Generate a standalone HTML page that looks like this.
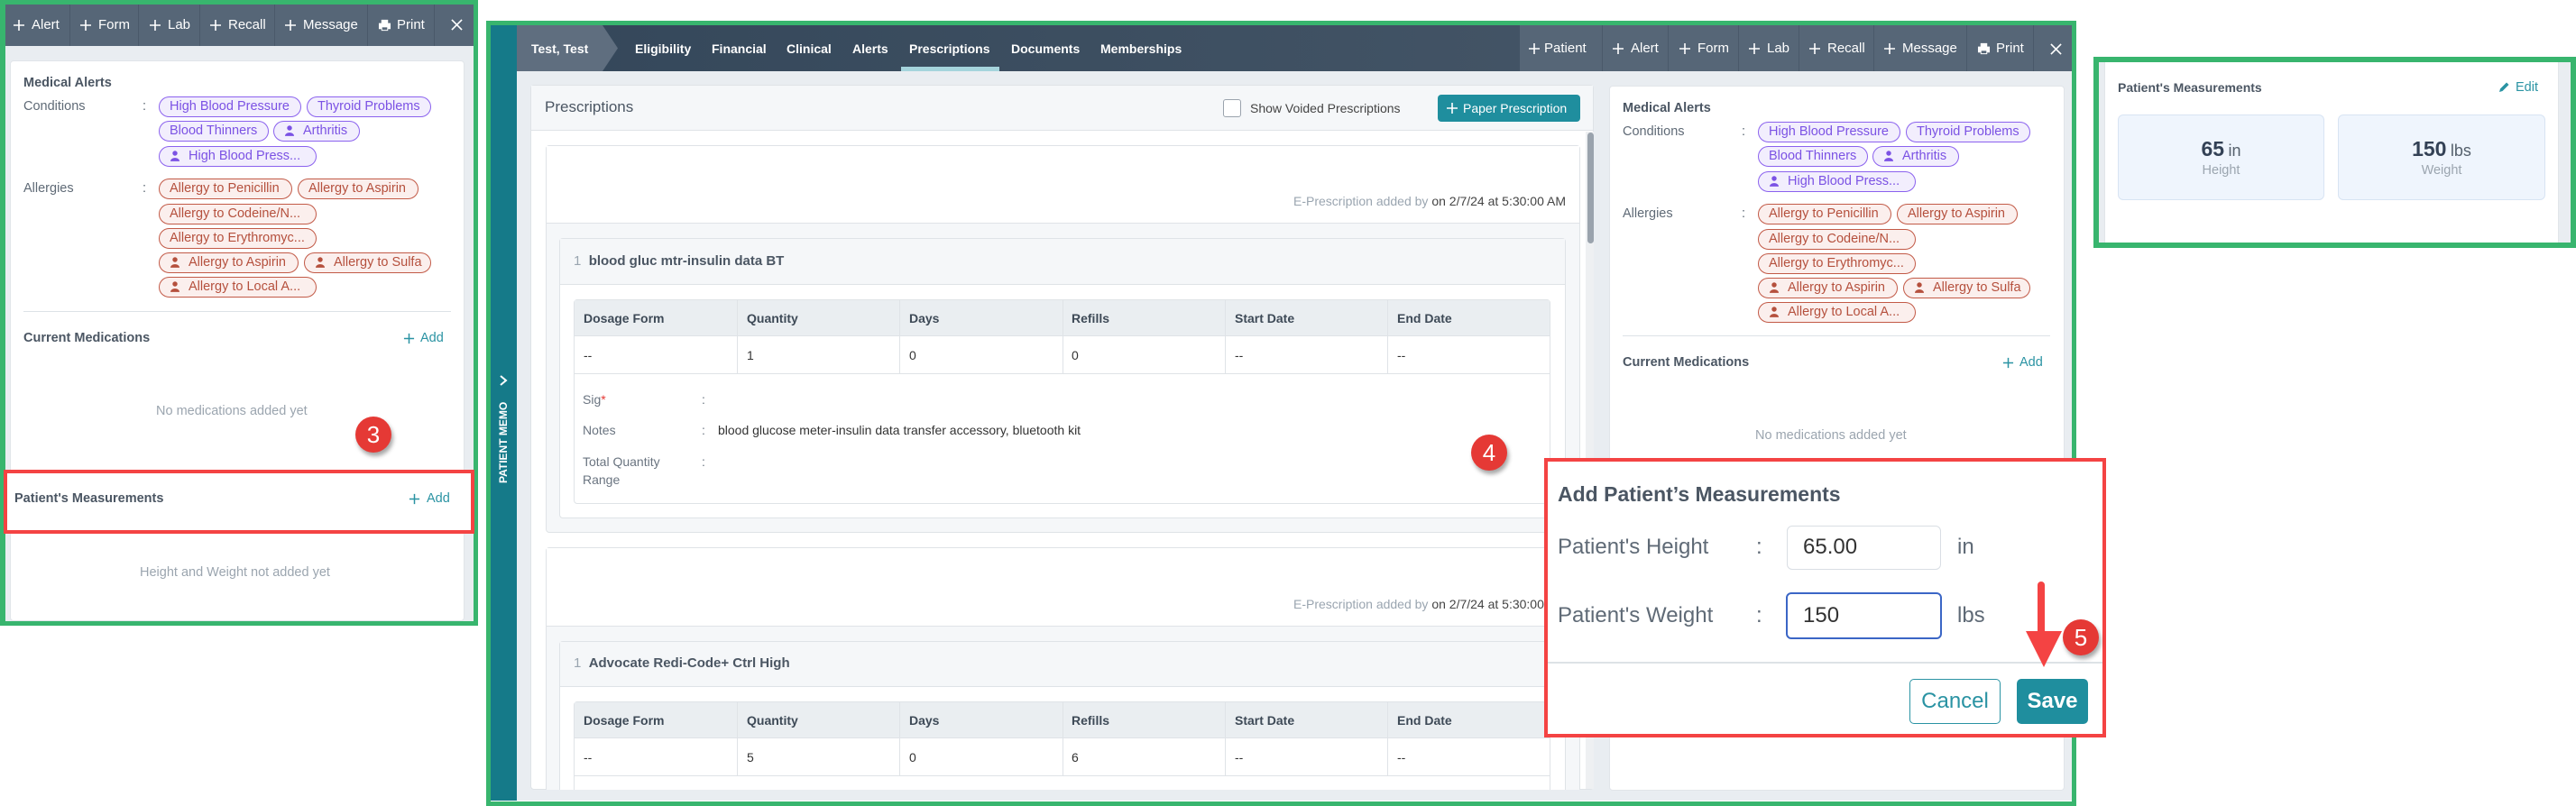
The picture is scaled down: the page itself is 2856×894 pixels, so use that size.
<!DOCTYPE html>
<html><head><meta charset="utf-8">
<style>
*{box-sizing:border-box;margin:0;padding:0}
body{width:2856px;height:894px;overflow:hidden;background:#fff;font-family:"Liberation Sans",Arial,sans-serif;position:relative}
.a{position:absolute}
.t{position:absolute;white-space:nowrap;line-height:20px;height:20px}
.w{color:#fff;font-size:15px}
.b{font-weight:bold}
.sep{position:absolute;width:1px;background:#4a596a}
.c{position:absolute;height:23px;border:1.5px solid;border-radius:12px;font-size:14.5px;line-height:20px;padding-left:11px;white-space:nowrap;overflow:hidden}
.p{border-color:#8b62ee;background:#f2eefd;color:#7b52e4}
.r{border-color:#c25a47;background:#fbefed;color:#b5503d}
.i{padding-left:32px}
.i svg{position:absolute;left:12px;top:4px}
.lbl{color:#5f6a76;font-size:14.5px}
.h{color:#4b5663;font-size:14.5px;font-weight:bold}
.add{color:#2a93a3;font-size:14.5px}
.gray{color:#9ba5af;font-size:14.5px}
.cell{position:absolute;font-size:14px;line-height:20px;white-space:nowrap}
.th{font-weight:bold;color:#3e4a57}
.td{color:#333}
.circ{position:absolute;width:40px;height:40px;border-radius:50%;background:#e53935;color:#fff;font-size:26px;text-align:center;line-height:40px;box-shadow:2px 4px 5px rgba(0,0,0,.35)}
.bd{position:absolute;border:1px solid #dfe3e7;border-radius:4px}
</style></head><body>

<svg width="0" height="0" style="position:absolute">
<defs>
<symbol id="plus" viewBox="0 0 14 14"><path d="M7 1V13M1 7H13" stroke="currentColor" stroke-width="1.6" fill="none"/></symbol>
<symbol id="usr" viewBox="0 0 11 13"><circle cx="5.5" cy="3.2" r="3" fill="currentColor"/><path d="M0 13C0 7.5 11 7.5 11 13Z" fill="currentColor"/></symbol>
<symbol id="prt" viewBox="0 0 16 15"><path d="M4 1h8v4H4z M1 5h14v7h-3v2H4v-2H1z" fill="currentColor"/><path d="M5 10h6v3H5z" fill="#566677"/></symbol>
<symbol id="x" viewBox="0 0 14 14"><path d="M1 1L13 13M13 1L1 13" stroke="currentColor" stroke-width="1.8" fill="none"/></symbol>
</defs></svg>

<!-- ============ LEFT PANEL ============ -->
<div class="a" style="left:0;top:0;width:530px;height:694px;border:6px solid #38b56e"></div>
<div class="a" style="left:6px;top:5px;width:519px;height:46px;background:#566677"></div>
<div class="sep" style="left:77px;top:5px;height:46px"></div>
<div class="sep" style="left:153px;top:5px;height:46px"></div>
<div class="sep" style="left:221px;top:5px;height:46px"></div>
<div class="sep" style="left:304px;top:5px;height:46px"></div>
<div class="sep" style="left:407px;top:5px;height:46px"></div>
<div class="sep" style="left:481px;top:5px;height:46px"></div>
<svg class="a" style="left:14px;top:21px;color:#fff" width="14" height="14"><use href="#plus"/></svg><div class="t w" style="left:35px;top:18px">Alert</div>
<svg class="a" style="left:88px;top:21px;color:#fff" width="14" height="14"><use href="#plus"/></svg><div class="t w" style="left:109px;top:18px">Form</div>
<svg class="a" style="left:165px;top:21px;color:#fff" width="14" height="14"><use href="#plus"/></svg><div class="t w" style="left:186px;top:18px">Lab</div>
<svg class="a" style="left:232px;top:21px;color:#fff" width="14" height="14"><use href="#plus"/></svg><div class="t w" style="left:253px;top:18px">Recall</div>
<svg class="a" style="left:315px;top:21px;color:#fff" width="14" height="14"><use href="#plus"/></svg><div class="t w" style="left:336px;top:18px">Message</div>
<svg class="a" style="left:419px;top:21px;color:#fff" width="15" height="14"><use href="#prt"/></svg><div class="t w" style="left:440px;top:18px">Print</div>
<svg class="a" style="left:500px;top:21px;color:#fff" width="13" height="13"><use href="#x"/></svg>
<div class="a" style="left:6px;top:51px;width:519px;height:638px;background:#e9edf1"></div>
<div class="a" style="left:11px;top:67px;width:504px;height:622px;background:#fff;border:1px solid #e1e5e9;border-radius:4px"></div>

<div class="a" style="left:0;top:0">
<div class="t h" style="left:26px;top:82px">Medical Alerts</div>
<div class="t lbl" style="left:26px;top:108px">Conditions</div><div class="t lbl" style="left:158px;top:108px">:</div>
<div class="c p" style="left:176px;top:107px;width:158px">High Blood Pressure</div>
<div class="c p" style="left:340px;top:107px;width:138px">Thyroid Problems</div>
<div class="c p" style="left:176px;top:134px;width:122px">Blood Thinners</div>
<div class="c p i" style="left:303px;top:134px;width:96px"><svg width="10" height="12"><use href="#usr"/></svg>Arthritis</div>
<div class="c p i" style="left:176px;top:162px;width:175px"><svg width="10" height="12"><use href="#usr"/></svg>High Blood Press...</div>
<div class="t lbl" style="left:26px;top:199px">Allergies</div><div class="t lbl" style="left:158px;top:199px">:</div>
<div class="c r" style="left:176px;top:198px;width:148px">Allergy to Penicillin</div>
<div class="c r" style="left:330px;top:198px;width:134px">Allergy to Aspirin</div>
<div class="c r" style="left:176px;top:226px;width:175px">Allergy to Codeine/N...</div>
<div class="c r" style="left:176px;top:253px;width:175px">Allergy to Erythromyc...</div>
<div class="c r i" style="left:176px;top:280px;width:155px"><svg width="10" height="12"><use href="#usr"/></svg>Allergy to Aspirin</div>
<div class="c r i" style="left:337px;top:280px;width:141px"><svg width="10" height="12"><use href="#usr"/></svg>Allergy to Sulfa</div>
<div class="c r i" style="left:176px;top:307px;width:175px"><svg width="10" height="12"><use href="#usr"/></svg>Allergy to Local A...</div>
<div class="a" style="left:26px;top:345px;width:474px;height:1px;background:#dde2e7"></div>
<div class="t h" style="left:26px;top:365px">Current Medications</div>
<svg class="a" style="left:447px;top:369px;color:#2a93a3" width="13" height="13"><use href="#plus"/></svg><div class="t add" style="left:466px;top:365px">Add</div>
<div class="t gray" style="left:173px;top:446px">No medications added yet</div>
</div>

<div class="circ" style="left:394px;top:462px">3</div>
<div class="a" style="left:4px;top:521px;width:522px;height:71px;border:4px solid #f44343;background:#fff"></div>
<div class="t h" style="left:16px;top:543px">Patient's Measurements</div>
<svg class="a" style="left:453px;top:547px;color:#2a93a3" width="13" height="13"><use href="#plus"/></svg><div class="t add" style="left:473px;top:543px">Add</div>
<div class="t gray" style="left:155px;top:625px">Height and Weight not added yet</div>

<!-- ============ MIDDLE PANEL ============ -->
<div class="a" style="left:539px;top:23px;width:1763px;height:871px;border:5px solid #38b56e"></div>
<div class="a" style="left:544px;top:28px;width:29px;height:860px;background:#157a89"></div>
<svg class="a" style="left:552px;top:416px" width="12" height="12"><path d="M3 1L9 6L3 11" stroke="#fff" stroke-width="2" fill="none"/></svg>
<div class="a" style="left:549px;top:432px;width:18px;height:104px;writing-mode:vertical-rl;transform:rotate(180deg);color:#fff;font-size:12px;font-weight:bold;line-height:18px;white-space:nowrap">PATIENT MEMO</div>

<div class="a" style="left:573px;top:28px;width:1724px;height:51px;background:linear-gradient(90deg,#34475a,#4a5a6b)"></div>
<svg class="a" style="left:573px;top:28px" width="115" height="51"><path d="M0 0H95L112 25.5L95 51H0Z" fill="#5f6e7f"/></svg>
<div class="a" style="left:1685px;top:28px;width:612px;height:51px;background:#566677"></div>
<div class="t w b" style="left:589px;top:44px;font-size:14px">Test, Test</div>
<div class="t w b" style="left:704px;top:44px;font-size:14px">Eligibility</div>
<div class="t w b" style="left:789px;top:44px;font-size:14px">Financial</div>
<div class="t w b" style="left:872px;top:44px;font-size:14px">Clinical</div>
<div class="t w b" style="left:945px;top:44px;font-size:14px">Alerts</div>
<div class="t w b" style="left:1008px;top:44px;font-size:14px">Prescriptions</div>
<div class="t w b" style="left:1121px;top:44px;font-size:14px">Documents</div>
<div class="t w b" style="left:1220px;top:44px;font-size:14px">Memberships</div>
<div class="a" style="left:999px;top:74px;width:109px;height:5px;background:#a5d4dc"></div>
<div class="sep" style="left:1776px;top:28px;height:51px"></div>
<div class="sep" style="left:1849px;top:28px;height:51px"></div>
<div class="sep" style="left:1927px;top:28px;height:51px"></div>
<div class="sep" style="left:1994px;top:28px;height:51px"></div>
<div class="sep" style="left:2077px;top:28px;height:51px"></div>
<div class="sep" style="left:2180px;top:28px;height:51px"></div>
<div class="sep" style="left:2254px;top:28px;height:51px"></div>
<svg class="a" style="left:1694px;top:47px;color:#fff" width="14" height="14"><use href="#plus"/></svg><div class="t w" style="left:1712px;top:44px">Patient</div>
<svg class="a" style="left:1787px;top:47px;color:#fff" width="14" height="14"><use href="#plus"/></svg><div class="t w" style="left:1808px;top:44px">Alert</div>
<svg class="a" style="left:1861px;top:47px;color:#fff" width="14" height="14"><use href="#plus"/></svg><div class="t w" style="left:1882px;top:44px">Form</div>
<svg class="a" style="left:1938px;top:47px;color:#fff" width="14" height="14"><use href="#plus"/></svg><div class="t w" style="left:1959px;top:44px">Lab</div>
<svg class="a" style="left:2005px;top:47px;color:#fff" width="14" height="14"><use href="#plus"/></svg><div class="t w" style="left:2026px;top:44px">Recall</div>
<svg class="a" style="left:2088px;top:47px;color:#fff" width="14" height="14"><use href="#plus"/></svg><div class="t w" style="left:2109px;top:44px">Message</div>
<svg class="a" style="left:2192px;top:47px;color:#fff" width="15" height="14"><use href="#prt"/></svg><div class="t w" style="left:2213px;top:44px">Print</div>
<svg class="a" style="left:2273px;top:48px;color:#fff" width="13" height="13"><use href="#x"/></svg>

<div class="a" style="left:573px;top:79px;width:1724px;height:809px;background:#e9edf1"></div>

<div class="a" style="left:588px;top:94px;width:1179px;height:782px;background:#fff;border:1px solid #dfe3e7;border-radius:4px"></div>
<div class="a" style="left:589px;top:95px;width:1177px;height:50px;background:#f5f7f9;border-bottom:1px solid #dfe3e7"></div>
<div class="t" style="left:604px;top:109px;font-size:17px;color:#4b5663">Prescriptions</div>
<div class="a" style="left:1356px;top:110px;width:20px;height:20px;border:1.5px solid #9aa3ad;border-radius:3px;background:#fff"></div>
<div class="t" style="left:1386px;top:110px;font-size:14px;color:#444">Show Voided Prescriptions</div>
<div class="a" style="left:1594px;top:105px;width:158px;height:30px;background:#1f8e9e;border-radius:4px"></div>
<svg class="a" style="left:1603px;top:113px;color:#fff" width="14" height="14"><use href="#plus"/></svg>
<div class="t" style="left:1622px;top:110px;font-size:14px;color:#fff">Paper Prescription</div>
<div class="a" style="left:1758px;top:146px;width:9px;height:729px;background:#eef0f2"></div>
<div class="a" style="left:1760px;top:147px;width:7px;height:123px;background:#9aa3ad;border-radius:4px"></div>

<div class="bd" style="left:605px;top:161px;width:1147px;height:430px;background:#f5f7f9"></div>
<div class="a" style="left:606px;top:162px;width:1145px;height:86px;background:#fff;border-bottom:1px solid #dfe3e7"></div>
<div class="t" style="left:1236px;width:500px;text-align:right;top:213px;font-size:14px;color:#9aa5b0">E-Prescription added by <span style="color:#444">on 2/7/24 at 5:30:00 AM</span></div>
<div class="bd" style="left:620px;top:264px;width:1116px;height:311px;background:#fff"></div>
<div class="a" style="left:621px;top:265px;width:1114px;height:51px;background:#f5f7f9;border-bottom:1px solid #dfe3e7"></div>
<div class="t" style="left:636px;top:280px;font-size:15px;color:#4b5663"><span style="color:#9aa5b0">1</span>&nbsp; <b>blood gluc mtr-insulin data BT</b></div>
<div class="bd" style="left:636px;top:332px;width:1083px;height:227px;background:#fff"></div>
<div class="a" style="left:637px;top:333px;width:1081px;height:40px;background:#eaeef1;border-bottom:1px solid #dfe3e7"></div>
<div class="a" style="left:637px;top:414px;width:1081px;height:1px;background:#dfe3e7"></div>
<div class="a" style="left:817px;top:333px;width:1px;height:81px;background:#dfe3e7"></div>
<div class="a" style="left:997px;top:333px;width:1px;height:81px;background:#dfe3e7"></div>
<div class="a" style="left:1178px;top:333px;width:1px;height:81px;background:#dfe3e7"></div>
<div class="a" style="left:1358px;top:333px;width:1px;height:81px;background:#dfe3e7"></div>
<div class="a" style="left:1538px;top:333px;width:1px;height:81px;background:#dfe3e7"></div>
<div class="cell th" style="left:647px;top:343px">Dosage Form</div>
<div class="cell th" style="left:828px;top:343px">Quantity</div>
<div class="cell th" style="left:1008px;top:343px">Days</div>
<div class="cell th" style="left:1188px;top:343px">Refills</div>
<div class="cell th" style="left:1369px;top:343px">Start Date</div>
<div class="cell th" style="left:1549px;top:343px">End Date</div>
<div class="cell td" style="left:647px;top:384px">--</div>
<div class="cell td" style="left:828px;top:384px">1</div>
<div class="cell td" style="left:1008px;top:384px">0</div>
<div class="cell td" style="left:1188px;top:384px">0</div>
<div class="cell td" style="left:1369px;top:384px">--</div>
<div class="cell td" style="left:1549px;top:384px">--</div>
<div class="cell" style="left:646px;top:433px;color:#6a7480">Sig<span style="color:#e53935">*</span></div>
<div class="cell" style="left:778px;top:433px;color:#6a7480">:</div>
<div class="cell" style="left:646px;top:467px;color:#6a7480">Notes</div>
<div class="cell" style="left:778px;top:467px;color:#6a7480">:</div>
<div class="cell td" style="left:796px;top:467px">blood glucose meter-insulin data transfer accessory, bluetooth kit</div>
<div class="cell" style="left:646px;top:502px;color:#6a7480">Total Quantity</div>
<div class="cell" style="left:778px;top:502px;color:#6a7480">:</div>
<div class="cell" style="left:646px;top:522px;color:#6a7480">Range</div>

<div class="bd" style="left:605px;top:607px;width:1147px;height:275px;background:#f5f7f9"></div>
<div class="a" style="left:606px;top:608px;width:1145px;height:87px;background:#fff;border-bottom:1px solid #dfe3e7"></div>
<div class="t" style="left:1236px;width:500px;text-align:right;top:660px;font-size:14px;color:#9aa5b0">E-Prescription added by <span style="color:#444">on 2/7/24 at 5:30:00 AM</span></div>
<div class="bd" style="left:620px;top:711px;width:1116px;height:175px;background:#fff"></div>
<div class="a" style="left:621px;top:712px;width:1114px;height:50px;background:#f5f7f9;border-bottom:1px solid #dfe3e7"></div>
<div class="t" style="left:636px;top:726px;font-size:15px;color:#4b5663"><span style="color:#9aa5b0">1</span>&nbsp; <b>Advocate Redi-Code+ Ctrl High</b></div>
<div class="bd" style="left:636px;top:778px;width:1083px;height:110px;background:#fff"></div>
<div class="a" style="left:637px;top:779px;width:1081px;height:40px;background:#eaeef1;border-bottom:1px solid #dfe3e7"></div>
<div class="a" style="left:637px;top:860px;width:1081px;height:1px;background:#dfe3e7"></div>
<div class="a" style="left:817px;top:779px;width:1px;height:81px;background:#dfe3e7"></div>
<div class="a" style="left:997px;top:779px;width:1px;height:81px;background:#dfe3e7"></div>
<div class="a" style="left:1178px;top:779px;width:1px;height:81px;background:#dfe3e7"></div>
<div class="a" style="left:1358px;top:779px;width:1px;height:81px;background:#dfe3e7"></div>
<div class="a" style="left:1538px;top:779px;width:1px;height:81px;background:#dfe3e7"></div>
<div class="cell th" style="left:647px;top:789px">Dosage Form</div>
<div class="cell th" style="left:828px;top:789px">Quantity</div>
<div class="cell th" style="left:1008px;top:789px">Days</div>
<div class="cell th" style="left:1188px;top:789px">Refills</div>
<div class="cell th" style="left:1369px;top:789px">Start Date</div>
<div class="cell th" style="left:1549px;top:789px">End Date</div>
<div class="cell td" style="left:647px;top:830px">--</div>
<div class="cell td" style="left:828px;top:830px">5</div>
<div class="cell td" style="left:1008px;top:830px">0</div>
<div class="cell td" style="left:1188px;top:830px">6</div>
<div class="cell td" style="left:1369px;top:830px">--</div>
<div class="cell td" style="left:1549px;top:830px">--</div>
<div class="a" style="left:573px;top:876px;width:1724px;height:12px;background:#e9edf1"></div>

<div class="circ" style="left:1631px;top:482px">4</div>

<div class="a" style="left:1784px;top:95px;width:505px;height:782px;background:#fff;border:1px solid #e1e5e9;border-radius:4px"></div>
<div class="a" style="left:1773px;top:28px">
<div class="t h" style="left:26px;top:82px">Medical Alerts</div>
<div class="t lbl" style="left:26px;top:108px">Conditions</div><div class="t lbl" style="left:158px;top:108px">:</div>
<div class="c p" style="left:176px;top:107px;width:158px">High Blood Pressure</div>
<div class="c p" style="left:340px;top:107px;width:138px">Thyroid Problems</div>
<div class="c p" style="left:176px;top:134px;width:122px">Blood Thinners</div>
<div class="c p i" style="left:303px;top:134px;width:96px"><svg width="10" height="12"><use href="#usr"/></svg>Arthritis</div>
<div class="c p i" style="left:176px;top:162px;width:175px"><svg width="10" height="12"><use href="#usr"/></svg>High Blood Press...</div>
<div class="t lbl" style="left:26px;top:199px">Allergies</div><div class="t lbl" style="left:158px;top:199px">:</div>
<div class="c r" style="left:176px;top:198px;width:148px">Allergy to Penicillin</div>
<div class="c r" style="left:330px;top:198px;width:134px">Allergy to Aspirin</div>
<div class="c r" style="left:176px;top:226px;width:175px">Allergy to Codeine/N...</div>
<div class="c r" style="left:176px;top:253px;width:175px">Allergy to Erythromyc...</div>
<div class="c r i" style="left:176px;top:280px;width:155px"><svg width="10" height="12"><use href="#usr"/></svg>Allergy to Aspirin</div>
<div class="c r i" style="left:337px;top:280px;width:141px"><svg width="10" height="12"><use href="#usr"/></svg>Allergy to Sulfa</div>
<div class="c r i" style="left:176px;top:307px;width:175px"><svg width="10" height="12"><use href="#usr"/></svg>Allergy to Local A...</div>
<div class="a" style="left:26px;top:344px;width:474px;height:1px;background:#dde2e7"></div>
<div class="t h" style="left:26px;top:364px">Current Medications</div>
<svg class="a" style="left:447px;top:368px;color:#2a93a3" width="13" height="13"><use href="#plus"/></svg><div class="t add" style="left:466px;top:364px">Add</div>
<div class="t gray" style="left:173px;top:445px">No medications added yet</div>
</div>

<div class="a" style="left:1712px;top:508px;width:623px;height:310px;border:4px solid #f44343;background:#fff"></div>
<div class="t b" style="left:1727px;top:536px;font-size:23px;line-height:24px;height:24px;color:#4b5663">Add Patient’s Measurements</div>
<div class="t" style="left:1727px;top:594px;font-size:24px;line-height:26px;height:26px;color:#5f6a76">Patient's Height</div>
<div class="t" style="left:1947px;top:594px;font-size:24px;line-height:26px;height:26px;color:#5f6a76">:</div>
<div class="a" style="left:1981px;top:583px;width:171px;height:49px;border:1.5px solid #d9dee4;border-radius:6px"></div>
<div class="t" style="left:1999px;top:594px;font-size:24px;line-height:26px;height:26px;color:#333">65.00</div>
<div class="t" style="left:2170px;top:594px;font-size:24px;line-height:26px;height:26px;color:#5f6a76">in</div>
<div class="t" style="left:1727px;top:670px;font-size:24px;line-height:26px;height:26px;color:#5f6a76">Patient's Weight</div>
<div class="t" style="left:1947px;top:670px;font-size:24px;line-height:26px;height:26px;color:#5f6a76">:</div>
<div class="a" style="left:1980px;top:657px;width:173px;height:52px;border:2.5px solid #3b66c6;border-radius:6px"></div>
<div class="t" style="left:1999px;top:670px;font-size:24px;line-height:26px;height:26px;color:#333">150</div>
<div class="t" style="left:2170px;top:670px;font-size:24px;line-height:26px;height:26px;color:#5f6a76">lbs</div>
<div class="a" style="left:1716px;top:734px;width:615px;height:2px;background:#dde2e6"></div>
<div class="a" style="left:2117px;top:753px;width:101px;height:50px;border:1.5px solid #2a93a3;border-radius:5px;background:#fff;color:#2a93a3;font-size:24px;line-height:47px;text-align:center">Cancel</div>
<div class="a" style="left:2236px;top:753px;width:79px;height:50px;border-radius:5px;background:#1f8e9e;color:#fff;font-size:24px;font-weight:bold;line-height:50px;text-align:center">Save</div>
<div class="a" style="left:2259px;top:645px;width:8px;height:60px;background:#f44343;border-radius:4px"></div>
<svg class="a" style="left:2245px;top:699px" width="42" height="42"><path d="M1 1H41L21 41Z" fill="#f44343"/></svg>
<div class="circ" style="left:2287px;top:687px">5</div>

<!-- ============ RIGHT PANEL ============ -->
<div class="a" style="left:2321px;top:63px;width:535px;height:212px;border:6px solid #38b56e"></div>
<div class="a" style="left:2327px;top:69px;width:523px;height:200px;background:#e9edf1"></div>
<div class="a" style="left:2333px;top:69px;width:504px;height:200px;background:#fff;border-left:1px solid #e1e5e9;border-right:1px solid #e1e5e9"></div>
<div class="t h" style="left:2348px;top:87px;font-size:14px">Patient's Measurements</div>
<svg class="a" style="left:2770px;top:90px" width="13" height="13"><path d="M1 12L2 8.5L9 1.5L11.5 4L4.5 11Z" fill="#2a93a3"/></svg>
<div class="t add" style="left:2789px;top:87px">Edit</div>
<div class="a" style="left:2348px;top:127px;width:229px;height:95px;background:#eff5fd;border:1px solid #d8e4f3;border-radius:6px"></div>
<div class="a" style="left:2592px;top:127px;width:230px;height:95px;background:#eff5fd;border:1px solid #d8e4f3;border-radius:6px"></div>
<div class="a" style="left:2348px;top:151px;width:229px;text-align:center;line-height:28px;color:#334155"><b style="font-size:23px">65</b> <span style="font-size:18px;color:#55606c">in</span></div>
<div class="a" style="left:2348px;top:179px;width:229px;text-align:center;font-size:14.5px;color:#9ba5af;line-height:20px">Height</div>
<div class="a" style="left:2592px;top:151px;width:230px;text-align:center;line-height:28px;color:#334155"><b style="font-size:23px">150</b> <span style="font-size:18px;color:#55606c">lbs</span></div>
<div class="a" style="left:2592px;top:179px;width:230px;text-align:center;font-size:14.5px;color:#9ba5af;line-height:20px">Weight</div>

</body></html>
